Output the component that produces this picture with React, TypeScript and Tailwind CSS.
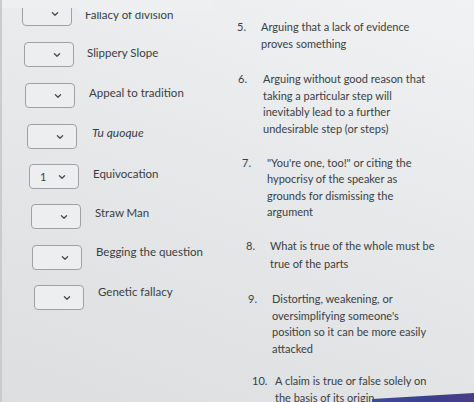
import React from "react";

function Chevron() {
  return (
    <svg width="8" height="6" viewBox="0 0 8 6" className="shrink-0">
      <path d="M1.4 1.7 L4 4.3 L6.6 1.7" fill="none" stroke="#4a4e53" strokeWidth="1.3" strokeLinecap="round" strokeLinejoin="round" />
    </svg>
  );
}

function Box({ value }: { value?: string }) {
  return (
    <div className="w-[50px] h-[25px] shrink-0 rounded-[4px] border border-[#9ea2a6] bg-[#eceef0] flex items-center pl-[10px] pr-[12px]">
      <span className="text-[11px] text-[#3e4246] w-[10px]">{value ?? ""}</span>
      <div className="flex-1 flex justify-end">
        <Chevron />
      </div>
    </div>
  );
}

export default function App() {
  return (
    <div className="relative w-[474px] h-[402px] overflow-hidden bg-[linear-gradient(200deg,#f0f2f3_0%,#e6e8ea_45%,#dcdee0_100%)] text-[#3a3e43] [font-family:Lato,'Noto_Sans',sans-serif]">
      <div className="flex h-full border-l-2 border-[#c9cbcd]">
        {/* left column */}
        <div className="flex flex-col w-[212px] shrink-0 text-[11.5px] leading-[16px]">
          <div className="flex items-start pl-[20px] h-[41px] mt-[1px]">
            <Box />
            <span className="ml-[13px] mt-[6px] whitespace-nowrap">Fallacy of division</span>
          </div>
          <div className="flex items-start pl-[22px] h-[41px]">
            <Box />
            <span className="ml-[13px] mt-[3px] whitespace-nowrap">Slippery Slope</span>
          </div>
          <div className="flex items-start pl-[23px] h-[41px]">
            <Box />
            <span className="ml-[14px] mt-[2px] whitespace-nowrap">Appeal to tradition</span>
          </div>
          <div className="flex items-start pl-[25px] h-[40px]">
            <Box />
            <span className="ml-[15px] mt-[1px] whitespace-nowrap italic text-[12px]">Tu quoque</span>
          </div>
          <div className="flex items-start pl-[27px] h-[40px]">
            <Box value="1" />
            <span className="ml-[14px] mt-[2px] whitespace-nowrap">Equivocation</span>
          </div>
          <div className="flex items-start pl-[29px] h-[41px]">
            <Box />
            <span className="ml-[14px] mt-[1px] whitespace-nowrap">Straw Man</span>
          </div>
          <div className="flex items-start pl-[30px] h-[40px]">
            <Box />
            <span className="ml-[14px] mt-[-1px] whitespace-nowrap">Begging the question</span>
          </div>
          <div className="flex items-start pl-[32px] h-[40px]">
            <Box />
            <span className="ml-[14px] mt-[-1px] whitespace-nowrap">Genetic fallacy</span>
          </div>
        </div>

        {/* right column */}
        <div className="flex flex-col text-[11px] leading-[16.6px]">
          <div className="flex mt-[19px] ml-[23px]">
            <span className="w-[24px] shrink-0">5.</span>
            <span className="whitespace-nowrap">Arguing that a lack of evidence<br />proves something</span>
          </div>
          <div className="flex mt-[19px] ml-[24px]">
            <span className="w-[25px] shrink-0">6.</span>
            <span className="whitespace-nowrap">Arguing without good reason that<br />taking a particular step will<br />inevitably lead to a further<br />undesirable step (or steps)</span>
          </div>
          <div className="flex mt-[17px] ml-[28px]">
            <span className="w-[25px] shrink-0">7.</span>
            <span className="whitespace-nowrap">"You're one, too!" or citing the<br />hypocrisy of the speaker as<br />grounds for dismissing the<br />argument</span>
          </div>
          <div className="flex mt-[16px] ml-[32px] leading-[18px]">
            <span className="w-[24px] shrink-0">8.</span>
            <span className="whitespace-nowrap">What is true of the whole must be<br />true of the parts</span>
          </div>
          <div className="flex mt-[18px] ml-[34px]">
            <span className="w-[24px] shrink-0">9.</span>
            <span className="whitespace-nowrap">Distorting, weakening, or<br />oversimplifying someone's<br />position so it can be more easily<br />attacked</span>
          </div>
          <div className="flex mt-[16px] ml-[38px]">
            <span className="w-[23px] shrink-0">10.</span>
            <span className="whitespace-nowrap">A claim is true or false solely on<br />the basis of its origin</span>
          </div>
        </div>
      </div>

      <div className="absolute left-[2px] top-0 w-[210px] h-[12px] bg-[#edeff0] [clip-path:polygon(0_0,100%_0,100%_12px,76px_12px,76px_8px,0_8px)]" />
      <div className="absolute right-0 bottom-0 w-[102px] h-[9px] bg-[linear-gradient(90deg,#3d4a9a,#3b3f8c_60%,#4a3d86)] [clip-path:polygon(0_6px,100%_0,100%_100%,0_100%)]" />
    </div>
  );
}
